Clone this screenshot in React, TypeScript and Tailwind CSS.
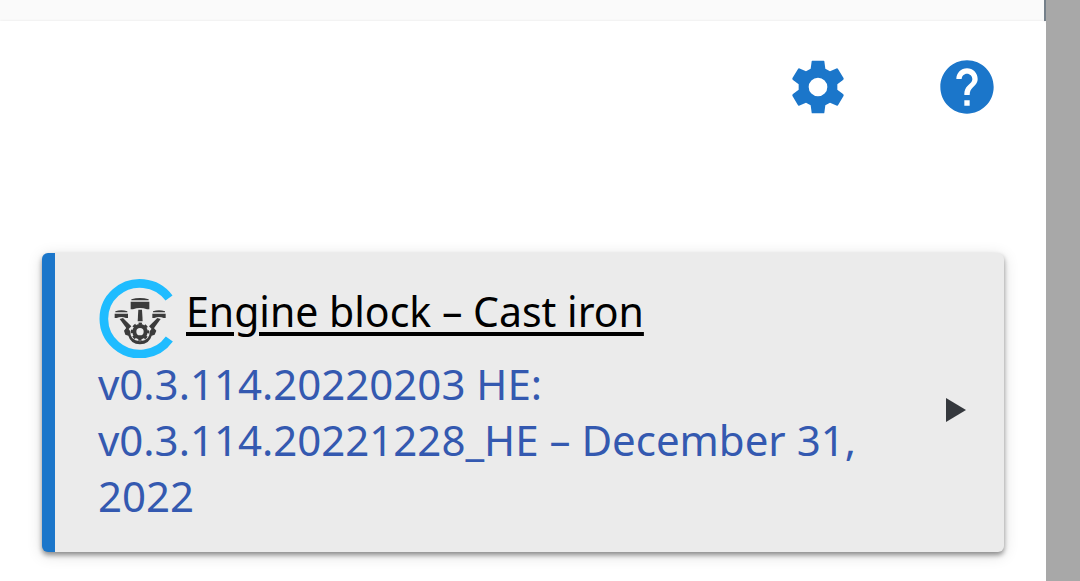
import React from 'react';
import { MdHelp } from 'react-icons/md';

interface VersionCardProps {
  title: string;
  version: string;
}

const GearIcon: React.FC = () => (
  <svg viewBox="19 16 192 192" className="size-16" fill="currentColor" aria-hidden="true">
    <path
      fillRule="evenodd"
      d="M98 33H132Q134 33 134 35L137 57L151 65L172 56Q174 56 175 58L192 86Q192 88 191 90L173 104V120L191 134Q192 136 192 138L175 167Q174 169 172 168L151 159L137 167L134 189Q134 191 132 191H98Q96 191 96 189L93 167L79 159L58 168Q56 169 55 167L38 138Q38 136 39 134L57 120V104L39 90Q38 88 38 86L55 58Q56 56 58 56L79 65L93 57L96 35Q96 33 98 33ZM115 84a28 28 0 1 0 0 56a28 28 0 1 0 0-56Z"
    />
  </svg>
);

const EngineLogo: React.FC = () => (
  <svg viewBox="25 27 228 237" className="h-[79px] w-[76px] shrink-0" aria-hidden="true">
    <path d="M238 84A108 106 0 1 0 239 207" fill="none" stroke="#1fbcff" strokeWidth="26" />
    <g fill="#3b3b3b">
      {/* pistons */}
      <path d="M125 88Q151 80 177 88V91H125ZM123 95H179V118H172Q151 110 130 118H123Z" />
      <path d="M77 124Q95 117 113 124V127H77ZM75 131H115V144H109Q95 138 81 144H75Z" />
      <path d="M190 124Q208 117 226 124V127H190ZM188 131H228V144H222Q208 138 194 144H188Z" />
      {/* rods */}
      <path d="M146 119H157L159 154H144Z" />
      <path d="M90 147L100 144L125 169L114 180Z" />
      <path d="M213 147L203 144L178 169L189 180Z" />
      {/* crankcase */}
      <path d="M112 171L103 182L107 194L116 197Q123 222 151 223Q179 222 186 197L195 194L200 182L190 171L180 184Q182 212 151 214Q120 212 122 184Z" />
    </g>
    <circle cx="151" cy="185" r="17" fill="none" stroke="#3b3b3b" strokeWidth="12" />
    <circle cx="151" cy="185" r="24" fill="none" stroke="#3b3b3b" strokeWidth="7" strokeDasharray="10 8.85" strokeDashoffset="5" />
  </svg>
);

const VersionCard: React.FC<VersionCardProps> = ({ title, version }) => (
  <article className="flex items-center rounded-md border-l-[13px] border-[#1b76ca] bg-[#ebebeb] pt-[26px] pr-8 pb-7 pl-[43px] shadow-[0_3px_5px_rgba(0,0,0,0.4),0_3px_16px_rgba(0,0,0,0.14)]">
    <div className="min-w-0 flex-1">
      <div className="flex items-start gap-3">
        <EngineLogo />
        <a
          href="#engine-block"
          className="pt-1 text-[41px] leading-[56px] text-black underline decoration-4 underline-offset-[5px]"
        >
          {title}
        </a>
      </div>
      <p className="-mt-0.5 text-[42px] leading-[56px] text-[#3459b0]">{version}</p>
    </div>
    <button type="button" aria-label="Expand" className="mt-4 flex size-8 items-center justify-center">
      <svg viewBox="0 0 20 24" className="h-6 w-5" fill="#35383d" aria-hidden="true">
        <path d="M0 0L20 12L0 24Z" />
      </svg>
    </button>
  </article>
);

export default function App() {
  return (
    <div className="flex min-h-screen bg-[#fafafa] font-['Noto_Sans',sans-serif]">
      <div className="flex flex-1 flex-col">
        <div className="h-[21px] border-r-2 border-[#75808a] bg-[#fafafa]" />
        <main className="flex-1 rounded-tr bg-white pr-[42px] pl-[42px] shadow-[0_0_3px_rgba(0,0,0,0.08)]">
          <header className="flex justify-end gap-[85px] pt-[34px] pr-[5px] pb-[134px] text-[#1b76ca]">
            <button type="button" aria-label="Settings">
              <GearIcon />
            </button>
            <button type="button" aria-label="Help">
              <MdHelp className="size-16" />
            </button>
          </header>
          <VersionCard
            title="Engine block – Cast iron"
            version="v0.3.114.20220203 HE: v0.3.114.20221228_HE – December 31, 2022"
          />
        </main>
      </div>
      <div className="w-[34px] bg-[#a8a8a8]" />
    </div>
  );
}
